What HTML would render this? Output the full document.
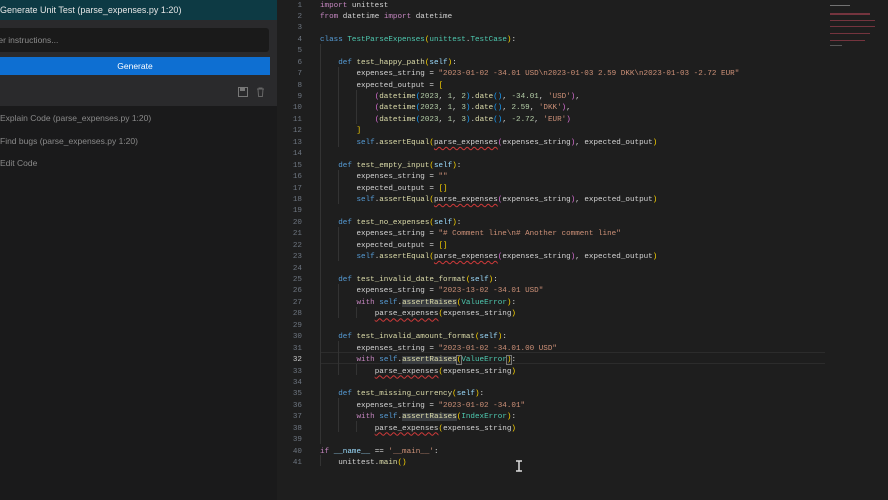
<!DOCTYPE html>
<html><head><meta charset="utf-8"><style>
*{margin:0;padding:0;box-sizing:border-box}
body{width:888px;height:500px;overflow:hidden;background:#1e1e1e;font-family:"Liberation Sans",sans-serif;position:relative}
#left{position:absolute;left:0;top:0;width:277px;height:500px;background:#1a1a1b}
#hdr{position:absolute;left:0;top:0;width:277px;height:20px;background:#0d3a44;color:#e6e6e6;font-size:9px;line-height:20px;padding-left:0;white-space:nowrap}
#top{position:absolute;left:0;top:20px;width:277px;height:86px;background:#2a2a2c}
#inp{position:absolute;left:-4px;top:8px;width:273px;height:24px;background:#1a1a1a;border-radius:3px;color:#8c8c8c;font-size:8.5px;line-height:24px;padding-left:0}
#btn{position:absolute;left:-4px;top:37px;width:274px;height:18px;background:#0e6fd2;color:#fff;font-size:8.5px;line-height:18px;text-align:center;padding-left:4px}
.it{position:absolute;left:0;color:#8a8a8a;font-size:8.5px;white-space:nowrap}
#code{position:absolute;left:0;top:1.5px;font-family:"Liberation Mono",monospace;font-size:7.6px;line-height:11.43px;color:#d4d4d4;white-space:pre}
.ln{position:absolute;left:282px;width:20px;text-align:right;color:#6e7681;font-family:"Liberation Mono",monospace;font-size:7.6px;line-height:11.43px}
.tx{position:absolute;left:320px}
.k{color:#c586c0}.b{color:#569cd6}.f{color:#dcdcaa}.s{color:#ce9178}.n{color:#b5cea8}.c{color:#4ec9b0}.v{color:#9cdcfe}
.y{color:#ffd700}.p{color:#da70d6}.q{color:#179fff}
.e{text-decoration:underline wavy #d03a3a;text-decoration-thickness:0.8px;text-underline-offset:2px}
.h{background:#3a3d41}
.g{position:absolute;width:1px;background:#333}
</style></head><body>
<div id="left">
<div id="hdr">Generate Unit Test (parse_expenses.py 1:20)</div>
<div id="top">
<div id="inp">ter instructions...</div>
<div id="btn">Generate</div>
<svg style="position:absolute;left:238px;top:67px" width="10" height="10" viewBox="0 0 10 10"><rect x="0.5" y="0.5" width="9" height="9" fill="none" stroke="#777"/><rect x="2" y="1" width="5" height="3" fill="#777"/></svg>
<svg style="position:absolute;left:256px;top:67px" width="9" height="10" viewBox="0 0 9 10"><path d="M1 2h7M3 2V1h3v1M2 2l.6 7.5h3.8L7 2" fill="none" stroke="#666"/></svg>
</div>
<div class="it" style="top:113px">Explain Code (parse_expenses.py 1:20)</div>
<div class="it" style="top:136px">Find bugs (parse_expenses.py 1:20)</div>
<div class="it" style="top:158px">Edit Code</div>
</div>
<div style="position:absolute;left:320px;top:352px;width:505px;height:12px;border-top:1px solid #2c2c2c;border-bottom:1px solid #2c2c2c"></div>
<div class="g" style="left:320px;top:44px;height:400px"></div>
<div class="g" style="left:338px;top:67px;height:80px"></div>
<div class="g" style="left:338px;top:170px;height:34px"></div>
<div class="g" style="left:338px;top:227px;height:34px"></div>
<div class="g" style="left:338px;top:284px;height:34px"></div>
<div class="g" style="left:338px;top:341px;height:34px"></div>
<div class="g" style="left:338px;top:398px;height:34px"></div>
<div class="g" style="left:356px;top:90px;height:34px"></div>
<div class="g" style="left:356px;top:307px;height:11px"></div>
<div class="g" style="left:356px;top:364px;height:11px"></div>
<div class="g" style="left:356px;top:421px;height:11px"></div>
<div class="g" style="left:320px;top:455px;height:11px"></div>
<div id="code">
<div class="ln" style="top:-1px">1<br>2<br>3<br>4<br>5<br>6<br>7<br>8<br>9<br>10<br>11<br>12<br>13<br>14<br>15<br>16<br>17<br>18<br>19<br>20<br>21<br>22<br>23<br>24<br>25<br>26<br>27<br>28<br>29<br>30<br>31<br><span style="color:#ccc">32</span><br>33<br>34<br>35<br>36<br>37<br>38<br>39<br>40<br>41</div>
<div class="tx" style="top:-1px"><span class="k">import</span> unittest
<span class="k">from</span> datetime <span class="k">import</span> datetime

<span class="b">class</span> <span class="c">TestParseExpenses</span><span class="y">(</span><span class="c">unittest</span>.<span class="c">TestCase</span><span class="y">)</span>:

    <span class="b">def</span> <span class="f">test_happy_path</span><span class="y">(</span><span class="v">self</span><span class="y">)</span>:
        expenses_string = <span class="s">"2023-01-02 -34.01 USD\n2023-01-03 2.59 DKK\n2023-01-03 -2.72 EUR"</span>
        expected_output = <span class="y">[</span>
            <span class="p">(</span><span class="f">datetime</span><span class="q">(</span><span class="n">2023</span>, <span class="n">1</span>, <span class="n">2</span><span class="q">)</span>.<span class="f">date</span><span class="q">()</span>, <span class="n">-34.01</span>, <span class="s">'USD'</span><span class="p">)</span>,
            <span class="p">(</span><span class="f">datetime</span><span class="q">(</span><span class="n">2023</span>, <span class="n">1</span>, <span class="n">3</span><span class="q">)</span>.<span class="f">date</span><span class="q">()</span>, <span class="n">2.59</span>, <span class="s">'DKK'</span><span class="p">)</span>,
            <span class="p">(</span><span class="f">datetime</span><span class="q">(</span><span class="n">2023</span>, <span class="n">1</span>, <span class="n">3</span><span class="q">)</span>.<span class="f">date</span><span class="q">()</span>, <span class="n">-2.72</span>, <span class="s">'EUR'</span><span class="p">)</span>
        <span class="y">]</span>
        <span class="b">self</span>.<span class="f">assertEqual</span><span class="y">(</span><span class="e">parse_expenses</span><span class="p">(</span>expenses_string<span class="p">)</span>, expected_output<span class="y">)</span>

    <span class="b">def</span> <span class="f">test_empty_input</span><span class="y">(</span><span class="v">self</span><span class="y">)</span>:
        expenses_string = <span class="s">""</span>
        expected_output = <span class="y">[]</span>
        <span class="b">self</span>.<span class="f">assertEqual</span><span class="y">(</span><span class="e">parse_expenses</span><span class="p">(</span>expenses_string<span class="p">)</span>, expected_output<span class="y">)</span>

    <span class="b">def</span> <span class="f">test_no_expenses</span><span class="y">(</span><span class="v">self</span><span class="y">)</span>:
        expenses_string = <span class="s">"# Comment line\n# Another comment line"</span>
        expected_output = <span class="y">[]</span>
        <span class="b">self</span>.<span class="f">assertEqual</span><span class="y">(</span><span class="e">parse_expenses</span><span class="p">(</span>expenses_string<span class="p">)</span>, expected_output<span class="y">)</span>

    <span class="b">def</span> <span class="f">test_invalid_date_format</span><span class="y">(</span><span class="v">self</span><span class="y">)</span>:
        expenses_string = <span class="s">"2023-13-02 -34.01 USD"</span>
        <span class="k">with</span> <span class="b">self</span>.<span class="f h">assertRaises</span><span class="y">(</span><span class="c">ValueError</span><span class="y">)</span>:
            <span class="e">parse_expenses</span><span class="y">(</span>expenses_string<span class="y">)</span>

    <span class="b">def</span> <span class="f">test_invalid_amount_format</span><span class="y">(</span><span class="v">self</span><span class="y">)</span>:
        expenses_string = <span class="s">"2023-01-02 -34.01.00 USD"</span>
        <span class="k">with</span> <span class="b">self</span>.<span class="f h">assertRaises</span><span class="y" style="outline:1px solid #777">(</span><span class="c">ValueError</span><span class="y" style="outline:1px solid #777">)</span>:
            <span class="e">parse_expenses</span><span class="y">(</span>expenses_string<span class="y">)</span>

    <span class="b">def</span> <span class="f">test_missing_currency</span><span class="y">(</span><span class="v">self</span><span class="y">)</span>:
        expenses_string = <span class="s">"2023-01-02 -34.01"</span>
        <span class="k">with</span> <span class="b">self</span>.<span class="f h">assertRaises</span><span class="y">(</span><span class="c">IndexError</span><span class="y">)</span>:
            <span class="e">parse_expenses</span><span class="y">(</span>expenses_string<span class="y">)</span>

<span class="k">if</span> <span class="v">__name__</span> == <span class="s">'__main__'</span>:
    unittest.<span class="f">main</span><span class="y">()</span></div>
</div>
<div style="position:absolute;left:826px;top:0;width:62px;height:50px;opacity:.8">
<div style="position:absolute;left:4px;top:5px;width:20px;height:1px;background:#888"></div>
<div style="position:absolute;left:4px;top:13px;width:40px;height:2px;background:#8a3a46"></div>
<div style="position:absolute;left:4px;top:20px;width:45px;height:1px;background:#8a3a46"></div>
<div style="position:absolute;left:4px;top:26px;width:45px;height:1px;background:#8a3a46"></div>
<div style="position:absolute;left:4px;top:33px;width:40px;height:1px;background:#8a3a46"></div>
<div style="position:absolute;left:4px;top:40px;width:35px;height:1px;background:#8a3a46"></div>
<div style="position:absolute;left:4px;top:45px;width:12px;height:1px;background:#666"></div>
</div>
<svg style="position:absolute;left:515px;top:460px" width="8" height="12" viewBox="0 0 8 12"><path d="M1 1h6M4 1v10M1 11h6" stroke="#ddd" stroke-width="1.5" fill="none"/></svg>
</body></html>
